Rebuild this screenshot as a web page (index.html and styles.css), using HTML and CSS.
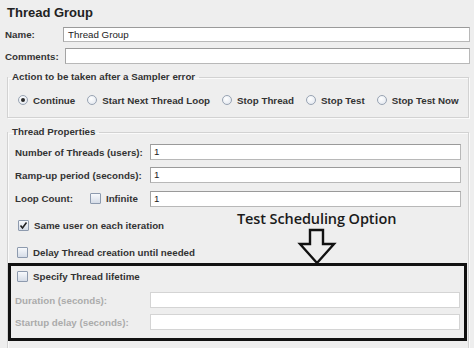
FILE: index.html
```html
<!DOCTYPE html>
<html lang="en">
<head>
  <meta charset="UTF-8" />
  <title>Thread Group</title>
  <link rel="stylesheet" href="styles.css">
</head>
<body>

  <h1 class="title">Thread Group</h1>

  <div class="field">
    <label class="name-label">Name:</label>
    <div class="box">Thread Group</div>
  </div>
  <div class="field comments">
    <label class="comments-label">Comments:</label>
    <div class="box"></div>
  </div>

  <fieldset class="group action">
    <legend>Action to be taken after a Sampler error</legend>
    <div class="radios">
      <span class="opt"><span class="radio on"></span>Continue</span>
      <span class="opt"><span class="radio"></span>Start Next Thread Loop</span>
      <span class="opt"><span class="radio"></span>Stop Thread</span>
      <span class="opt"><span class="radio"></span>Stop Test</span>
      <span class="opt"><span class="radio"></span>Stop Test Now</span>
    </div>
  </fieldset>

  <fieldset class="group props">
    <legend>Thread Properties</legend>
    <div class="rows">
      <label>Number of Threads (users):</label>
      <div class="box">1</div>
      <label>Ramp-up period (seconds):</label>
      <div class="box">1</div>
      <label class="loop">Loop Count: <span class="opt"><span class="check"></span>Infinite</span></label>
      <div class="box">1</div>
    </div>

    <div class="opt check-row same">
      <span class="check on">
        <svg viewBox="0 0 11 11" width="11" height="11"><path d="M2.5 5.5 L4.5 8 L8.5 2.5" fill="none" stroke="#222" stroke-width="1.6"/></svg>
      </span>Same user on each iteration
    </div>
    <div class="opt check-row delay"><span class="check"></span>Delay Thread creation until needed</div>

    <div class="lifetime">
      <div class="opt check-row"><span class="check"></span>Specify Thread lifetime</div>
      <div class="rows off">
        <label>Duration (seconds):</label>
        <div class="box"></div>
        <label>Startup delay (seconds):</label>
        <div class="box"></div>
      </div>
    </div>
  </fieldset>

  <div class="note">
    <span class="note-text">Test Scheduling Option</span>
    <svg class="arrow" width="40" height="40" viewBox="0 0 40 40">
      <path d="M11 1 H24 V15 H35 L18 34 L1 15 H11 Z" fill="none" stroke="#111" stroke-width="2.4"/>
    </svg>
  </div>

</body>
</html>
```

FILE: styles.css
```css
html, body {
  height: 100%;
  overflow: hidden;
}

body {
  margin: 0;
  background: #eeeeee;
  color: #333;
  font-family: "Liberation Sans", Arial, sans-serif;
  font-size: 9.75px;
  font-weight: bold;
  position: relative;
}

.title {
  margin: 0;
  padding-left: 7px;
  height: 26px;
  line-height: 26px;
  font-size: 13px;
  color: #222;
}

.field {
  display: flex;
  align-items: center;
  height: 15px;
  margin: 1px 4px 0 5px;
}

.field.comments {
  height: 16px;
  margin-top: 6px;
}

.name-label {
  width: 58px;
}

.comments-label {
  width: 60px;
}

.box {
  height: 100%;
  box-sizing: border-box;
  background: #fff;
  border: 1px solid #b8b8b8;
  border-top-color: #9a9a9a;
  border-left-color: #a4a4a4;
  font-weight: normal;
  color: #222;
  padding-left: 4px;
  line-height: 13px;
}

.field .box {
  flex: 1;
}

.group {
  margin: 7px 5px 0 7px;
  padding: 0;
  border: 1px solid #d2d2d2;
  box-shadow: inset 1px 1px 0 #fafafa, 1px 1px 0 #fafafa;
  min-width: 0;
}

.group legend {
  padding: 0 4px;
  line-height: 12px;
  color: #333;
}

.radios {
  display: flex;
  gap: 12px;
  padding: 11px 0 11px 10px;
  height: 12px;
  align-items: center;
}

.opt {
  display: inline-flex;
  align-items: center;
  white-space: nowrap;
}

.radio {
  width: 10px;
  height: 10px;
  box-sizing: border-box;
  border: 1px solid #98a3b3;
  border-radius: 50%;
  background: radial-gradient(circle at 40% 35%, #ffffff, #dde3ec);
  margin-right: 5px;
  position: relative;
}

.radio.on::after {
  content: "";
  position: absolute;
  left: 2px;
  top: 2px;
  width: 4px;
  height: 4px;
  border-radius: 50%;
  background: #2a2a2a;
}

.check {
  width: 11px;
  height: 11px;
  box-sizing: border-box;
  border: 1px solid #8d9aae;
  border-radius: 1px;
  background: linear-gradient(#f7f9fc, #d5dce7);
  margin-right: 5px;
  display: inline-flex;
}

.check svg {
  margin: -1px;
}

.props {
  margin-top: 8px;
  padding-bottom: 40px;
}

.rows {
  display: grid;
  grid-template-columns: 135px 1fr;
  grid-auto-rows: 16px;
  row-gap: 7px;
  align-items: center;
  padding: 6px 7px 0 7px;
}

.rows label {
  white-space: nowrap;
}

.rows .box {
  padding-left: 3px;
}

.loop {
  display: flex;
  align-items: center;
  margin-top: 1px;
}

.loop + .box {
  margin-top: 1px;
  height: 16px;
}

.loop .opt {
  margin-left: 17px;
}

.check-row {
  display: flex;
  height: 12px;
  padding-left: 10px;
}

.check-row.same {
  margin-top: 13px;
}

.check-row.delay {
  margin-top: 15px;
  padding-left: 9px;
}

.lifetime {
  margin: 5px 1px 0 0;
  border: 3px solid #111;
  padding: 4px 0 8px 0;
}

.lifetime .check-row {
  padding-left: 6px;
  margin-bottom: 10px;
}

.lifetime .rows {
  padding: 0 4px;
  row-gap: 6px;
}

.rows.off label {
  color: #ababab;
}

.rows.off .box {
  border-color: #d4d4d4;
  height: 16.5px;
}

.note {
  position: absolute;
  left: 237px;
  top: 210px;
}

.note-text {
  display: block;
  font-family: "Open Sans", sans-serif;
  font-weight: 600;
  font-size: 14.5px;
  color: #1a1a1a;
  line-height: 18px;
  letter-spacing: -0.1px;
}

.arrow {
  position: absolute;
  left: 62px;
  top: 19px;
  overflow: visible;
}
```
